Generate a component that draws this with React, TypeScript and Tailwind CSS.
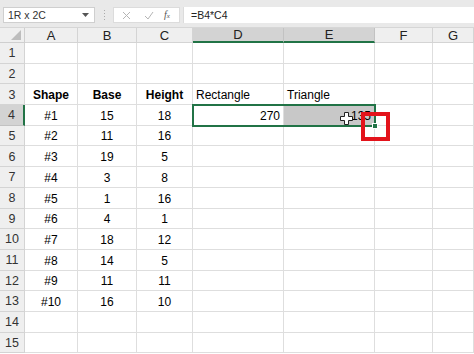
import React from "react";

const cols = [
  { key: "A", w: 53 },
  { key: "B", w: 59 },
  { key: "C", w: 56 },
  { key: "D", w: 91 },
  { key: "E", w: 91 },
  { key: "F", w: 58 },
  { key: "G", w: 41 },
];

type Cell = { t: string; bold?: boolean; align?: "left" | "center" | "right"; fill?: boolean };

const data: Record<number, Record<string, Cell>> = {
  3: {
    A: { t: "Shape", bold: true },
    B: { t: "Base", bold: true },
    C: { t: "Height", bold: true },
    D: { t: "Rectangle", align: "left" },
    E: { t: "Triangle", align: "left" },
  },
  4: {
    A: { t: "#1" },
    B: { t: "15" },
    C: { t: "18" },
    D: { t: "270", align: "right" },
    E: { t: "135", align: "right", fill: true },
  },
};
const rest: [string, string, string][] = [
  ["#2", "11", "16"],
  ["#3", "19", "5"],
  ["#4", "3", "8"],
  ["#5", "1", "16"],
  ["#6", "4", "1"],
  ["#7", "18", "12"],
  ["#8", "14", "5"],
  ["#9", "11", "11"],
  ["#10", "16", "10"],
];
rest.forEach((r, i) => {
  data[5 + i] = { A: { t: r[0] }, B: { t: r[1] }, C: { t: r[2] } };
});

const rows = Array.from({ length: 15 }, (_, i) => i + 1);

export default function App() {
  return (
    <div
      className="w-[474px] h-[354px] overflow-hidden bg-white relative"
      style={{ fontFamily: '"Liberation Sans", Arial, sans-serif' }}
    >
      {/* Toolbar */}
      <div className="h-[28px] bg-[#e9e9e9] flex items-start pt-[7px] border-b border-[#d6d6d6]">
        <div className="ml-[3px] w-[92px] h-[16px] bg-white border border-[#cfcfcf] flex items-center justify-between px-[4px]">
          <span className="text-[10.5px] text-[#333] leading-none">1R x 2C</span>
          <svg width="7" height="4" viewBox="0 0 7 4" className="mr-[1px]">
            <path d="M0 0 L7 0 L3.5 4 Z" fill="#555" />
          </svg>
        </div>
        <div className="w-[18px] h-[16px] flex flex-col items-center justify-center gap-[2px]">
          <div className="w-[1px] h-[1px] bg-[#aaa]" />
          <div className="w-[1px] h-[1px] bg-[#aaa]" />
          <div className="w-[1px] h-[1px] bg-[#aaa]" />
          <div className="w-[1px] h-[1px] bg-[#aaa]" />
        </div>
        <div className="w-[67px] h-[16px] bg-white border border-[#dcdcdc] flex items-center">
          <svg width="9" height="9" viewBox="0 0 9 9" className="ml-[8px]">
            <path d="M1 1 L8 8 M8 1 L1 8" stroke="#b5b5b5" strokeWidth="1" />
          </svg>
          <svg width="10" height="9" viewBox="0 0 10 9" className="ml-[13px]">
            <path d="M1 5 L4 8 L9 1" stroke="#b5b5b5" strokeWidth="1" fill="none" />
          </svg>
          <span
            className="ml-[10px] text-[10px] italic text-[#555] leading-none"
            style={{ fontFamily: '"Liberation Serif", serif' }}
          >
            f<span className="text-[7px]">x</span>
          </span>
        </div>
        <div className="ml-[3px] flex-1 h-[16px] bg-white border-l border-[#dcdcdc] flex items-center pl-[7px]">
          <span className="text-[10.5px] text-[#222] leading-none">=B4*C4</span>
        </div>
      </div>

      {/* Grid */}
      <div className="relative">
        {/* header row */}
        <div className="flex h-[15px]">
          <div className="w-[25px] h-full bg-[#efefef] border-r border-b border-[#cfcfcf] relative">
            <svg width="10" height="10" viewBox="0 0 10 10" className="absolute right-[3px] bottom-[2px]">
              <path d="M10 0 L10 10 L0 10 Z" fill="#bdbdbd" />
            </svg>
          </div>
          {cols.map((c) => {
            const sel = c.key === "D" || c.key === "E";
            return (
              <div
                key={c.key}
                className={
                  sel
                    ? "h-full bg-[#d3d3d3] border-r border-[#c2c2c2] border-b-2 border-b-[#217346] flex items-center justify-center text-[13px] text-[#222] leading-none"
                    : "h-full bg-[#efefef] border-r border-b border-[#d4d4d4] flex items-center justify-center text-[13px] text-[#222] leading-none"
                }
                style={{ width: c.w }}
              >
                {c.key}
              </div>
            );
          })}
        </div>
        {rows.map((r) => {
          const sel = r === 4;
          return (
            <div key={r} className="flex h-[20.7px]">
              <div
                className={
                  sel
                    ? "w-[25px] h-full bg-[#d3d3d3] border-r-2 border-r-[#217346] border-b border-[#c2c2c2] flex items-end justify-center pb-[3px] text-[12.5px] text-[#333] leading-none"
                    : "w-[25px] h-full bg-[#efefef] border-r border-b border-[#d4d4d4] flex items-end justify-center pb-[3px] text-[12.5px] text-[#333] leading-none"
                }
              >
                {r}
              </div>
              {cols.map((c) => {
                const cell = data[r]?.[c.key];
                const align = cell?.align ?? "center";
                const justify =
                  align === "left" ? "justify-start pl-[3px]" : align === "right" ? "justify-end pr-[3px]" : "justify-center";
                return (
                  <div
                    key={c.key}
                    className={`h-full border-r border-b border-[#dedede] flex items-end pb-[3px] text-[12px] text-black leading-none ${justify} ${
                      cell?.fill ? "bg-[#c8c8c8]" : ""
                    } ${cell?.bold ? "font-bold" : ""}`}
                    style={{ width: c.w }}
                  >
                    {cell?.t ?? ""}
                  </div>
                );
              })}
            </div>
          );
        })}

        {/* selection border D4:E4 */}
        <div className="absolute left-[192px] top-[76px] w-[184px] h-[23px] border-2 border-[#217346] pointer-events-none" />
        {/* fill handle */}
        <div className="absolute left-[372px] top-[95px] w-[6px] h-[6px] bg-[#217346] border border-white" />
        {/* cursor */}
        <svg width="13" height="13" viewBox="0 0 13 13" className="absolute left-[340px] top-[84px]">
          <path
            d="M4.5 0.5 H8.5 V4.5 H12.5 V8.5 H8.5 V12.5 H4.5 V8.5 H0.5 V4.5 H4.5 Z"
            fill="white"
            stroke="#222"
            strokeWidth="1"
          />
        </svg>
        {/* red highlight */}
        <div className="absolute left-[361px] top-[84px] w-[29px] h-[29px] border-[4px] border-[#e3131b]" />
      </div>
    </div>
  );
}
